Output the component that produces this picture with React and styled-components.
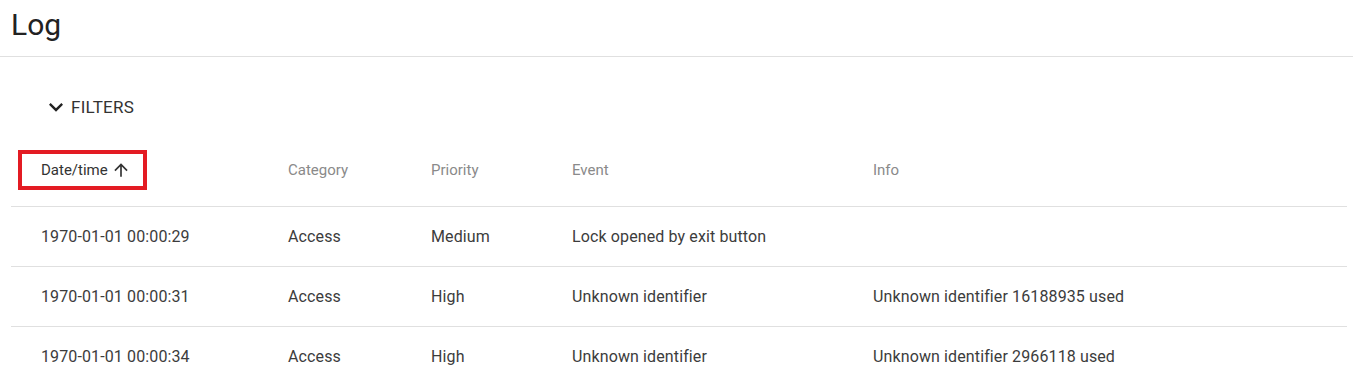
import React from "react";
import styled, { createGlobalStyle } from "styled-components";

const GlobalStyle = createGlobalStyle`
	body {
		margin: 0;
		background: #fff;
		font-family: Roboto, "Liberation Sans", sans-serif;
		color: rgba(0, 0, 0, 0.87);
	}
`;

// styles
const Page = styled.div`
	width: 100%;
`;

const TitleBar = styled.header`
	height: 57px;
	padding: 7px 11px 0;
	box-sizing: border-box;
	border-bottom: 1px solid #e0e0e0;
`;

const Title = styled.h1`
	margin: 0;
	font-size: 30px;
	font-weight: 400;
	color: #222;
`;

const FilterBar = styled.div`
	height: 77px;
	padding: 32px 0 0 42px;
	box-sizing: border-box;
`;

const FilterButton = styled.button`
	display: inline-flex;
	align-items: center;
	gap: 1px;
	height: 36px;
	padding: 0;
	border: none;
	background: none;
	font-family: inherit;
	font-size: 17px;
	letter-spacing: 0.25px;
	color: #333;
	text-transform: uppercase;
	cursor: pointer;

	svg {
		width: 28px;
		height: 28px;
		fill: #222;
	}
`;

const Table = styled.div`
	margin: 0 6px 0 11px;
`;

const Row = styled.div`
	display: grid;
	grid-template-columns: 247px 143px 141px 301px 1fr;
	align-items: center;
	height: ${(p) => (p.$head ? "73px" : "60px")};
	box-sizing: border-box;
	border-bottom: 1px solid #e0e0e0;
`;

const HeadCell = styled.div`
	padding-left: ${(p) => (p.$first ? "7px" : "30px")};
	font-size: 15px;
	color: #8a8a8a;
`;

const SortButton = styled.button`
	display: inline-flex;
	align-items: center;
	gap: 3px;
	height: 40px;
	padding: 0 12px 0 19px;
	box-sizing: border-box;
	border: 4px solid #e31b23;
	background: #fff;
	font-family: inherit;
	font-size: 15px;
	color: #333;

	svg {
		width: 20px;
		height: 20px;
		fill: #333;
	}
`;

const Cell = styled.div`
	padding-left: 30px;
	font-size: 16px;
	letter-spacing: 0.12px;
	color: #3c3c3c;
	white-space: nowrap;
`;

const columns = ["Category", "Priority", "Event", "Info"];

const rows = [
	["1970-01-01 00:00:29", "Access", "Medium", "Lock opened by exit button", ""],
	["1970-01-01 00:00:31", "Access", "High", "Unknown identifier", "Unknown identifier 16188935 used"],
	["1970-01-01 00:00:34", "Access", "High", "Unknown identifier", "Unknown identifier 2966118 used"],
];

export default function App() {
	return (
		<Page>
			<GlobalStyle />
			<TitleBar>
				<Title>Log</Title>
			</TitleBar>

			<FilterBar>
				<FilterButton>
					<svg viewBox="0 0 24 24">
						<path d="M16.59 8.59L12 13.17 7.41 8.59 6 10l6 6 6-6z" />
					</svg>
					Filters
				</FilterButton>
			</FilterBar>

			<Table>
				<Row $head>
					<HeadCell $first>
						<SortButton>
							Date/time
							<svg viewBox="0 0 24 24">
								<path d="M4 12l1.41 1.41L11 7.83V20h2V7.83l5.58 5.59L20 12l-8-8-8 8z" />
							</svg>
						</SortButton>
					</HeadCell>
					{columns.map((c) => (
						<HeadCell key={c}>{c}</HeadCell>
					))}
				</Row>
				{rows.map((r) => (
					<Row key={r[0]}>
						{r.map((v, i) => (
							<Cell key={i}>{v}</Cell>
						))}
					</Row>
				))}
			</Table>
		</Page>
	);
}
